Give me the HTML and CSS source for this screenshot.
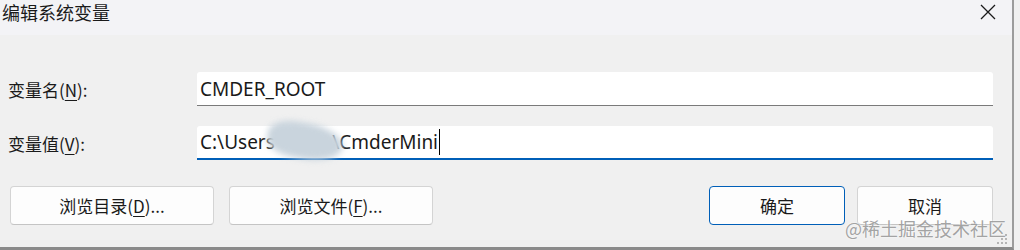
FILE: index.html
```html
<!DOCTYPE html>
<html lang="zh-CN">
<head>
    <meta charset="UTF-8">
    <title>编辑系统变量</title>
    <link rel="stylesheet" href="styles.css">
</head>
<body>
    <!-- Ventana del diálogo -->
    <div class="ventana">
        <div class="titulo">
            <span class="titulo-texto">编辑系统变量</span>
            <svg class="cerrar" width="16" height="16" viewBox="0 0 16 16">
                <path d="M1 1 L15 15 M15 1 L1 15" stroke="#1a1a1a" stroke-width="1.3" fill="none"/>
            </svg>
        </div>

        <div class="contenido">
            <!-- Campos -->
            <div class="fila">
                <label class="etiqueta">变量名(<u>N</u>):</label>
                <div class="campo">CMDER_ROOT</div>
            </div>
            <div class="fila">
                <label class="etiqueta">变量值(<u>V</u>):</label>
                <div class="campo activo">C:\Users<span class="oculto">\xxxxx</span>\CmderMini<span class="cursor"></span>
                    <span class="mancha"></span>
                </div>
            </div>

            <!-- Botones -->
            <div class="botones">
                <div class="grupo">
                    <button class="boton">浏览目录(<u>D</u>)...</button>
                    <button class="boton">浏览文件(<u>F</u>)...</button>
                </div>
                <div class="grupo">
                    <button class="boton boton-ok">确定</button>
                    <button class="boton">取消</button>
                </div>
            </div>
        </div>

        <div class="marca">@稀土掘金技术社区</div>
        <svg class="agarre" width="12" height="12" viewBox="0 0 12 12">
            <rect x="8" y="0" width="2" height="2" fill="#b5b5b5"/>
            <rect x="4" y="4" width="2" height="2" fill="#b5b5b5"/>
            <rect x="8" y="4" width="2" height="2" fill="#b5b5b5"/>
            <rect x="0" y="8" width="2" height="2" fill="#b5b5b5"/>
            <rect x="4" y="8" width="2" height="2" fill="#b5b5b5"/>
            <rect x="8" y="8" width="2" height="2" fill="#b5b5b5"/>
        </svg>
    </div>
</body>
</html>
```

FILE: styles.css
```css
/* Estilo general */
body {
    margin: 0;
    padding: 0;
    background-color: #f0f0f0;
    font-family: "Noto Sans", "Noto Sans CJK SC", sans-serif;
    color: #1a1a1a;
    overflow: hidden;
}

/* Ventana */
.ventana {
    position: relative;
    width: 1012px;
    height: 247px;
    background-color: #f0f0f0;
    border-right: 2px solid #9c9c9c;
    border-bottom: 3px solid #8a8a8a;
}

/* Barra de título */
.titulo {
    height: 35px;
    background-color: #f3f3f6;
    display: flex;
    justify-content: space-between;
    align-items: flex-start;
}

.titulo-texto {
    font-family: "Noto Sans CJK SC", sans-serif;
    font-size: 18px;
    line-height: 24px;
    padding-left: 2px;
}

.cerrar {
    margin-top: 4px;
    margin-right: 16px;
}

/* Contenido */
.contenido {
    padding: 37px 19px 0 8px;
    display: flex;
    flex-direction: column;
    gap: 20px;
}

.fila {
    display: flex;
    align-items: center;
    height: 34px;
}

.etiqueta {
    width: 189px;
    font-family: "Noto Sans CJK SC", sans-serif;
    font-size: 17px;
    color: #1a1a1a;
}

.etiqueta u {
    text-decoration-thickness: 1px;
    text-underline-offset: 3px;
}

.campo {
    position: relative;
    flex: 1;
    height: 33px;
    background-color: #fff;
    border-bottom: 1px solid #7a7a7a;
    border-radius: 3px 3px 0 0;
    font-size: 19px;
    line-height: 32px;
    padding-left: 3px;
    display: flex;
    align-items: center;
}

.campo.activo {
    height: 32px;
    border-bottom: 2px solid #005fb8;
}

.oculto {
    color: #fff;
}

.cursor {
    display: inline-block;
    width: 1px;
    height: 26px;
    background-color: #000;
    margin-left: 1px;
}

/* Zona borrosa encima del texto */
.mancha {
    position: absolute;
    left: 70px;
    top: -3px;
    width: 76px;
    height: 36px;
    background-color: #c9d4dd;
    border-radius: 40% 50% 50% 40%;
    filter: blur(3px);
    transform: rotate(10deg);
}

/* Botones */
.botones {
    margin-top: 6px;
    display: flex;
    justify-content: space-between;
    padding-left: 2px;
}

.grupo {
    display: flex;
    gap: 12px;
}

.boton {
    width: 204px;
    height: 39px;
    background-color: #fdfdfd;
    border: 1px solid #d4d4d4;
    border-bottom-color: #c4c4c4;
    border-radius: 4px;
    font-family: "Noto Sans CJK SC", sans-serif;
    font-size: 17px;
    color: #1a1a1a;
    padding: 0;
}

.grupo:first-child .boton {
    margin-right: 3px;
}

.grupo:last-child .boton {
    width: 136px;
}

.boton-ok {
    border: 1px solid #005fb8;
}

.boton u {
    text-decoration-thickness: 1px;
    text-underline-offset: 3px;
}

/* Marca de agua */
.marca {
    position: absolute;
    right: 6px;
    bottom: 6px;
    font-family: "Noto Sans CJK SC", sans-serif;
    font-size: 18px;
    color: rgba(140, 140, 140, 0.8);
    text-shadow: 0 0 2px #fff;
}

.agarre {
    position: absolute;
    right: 3px;
    bottom: 1px;
}
```
